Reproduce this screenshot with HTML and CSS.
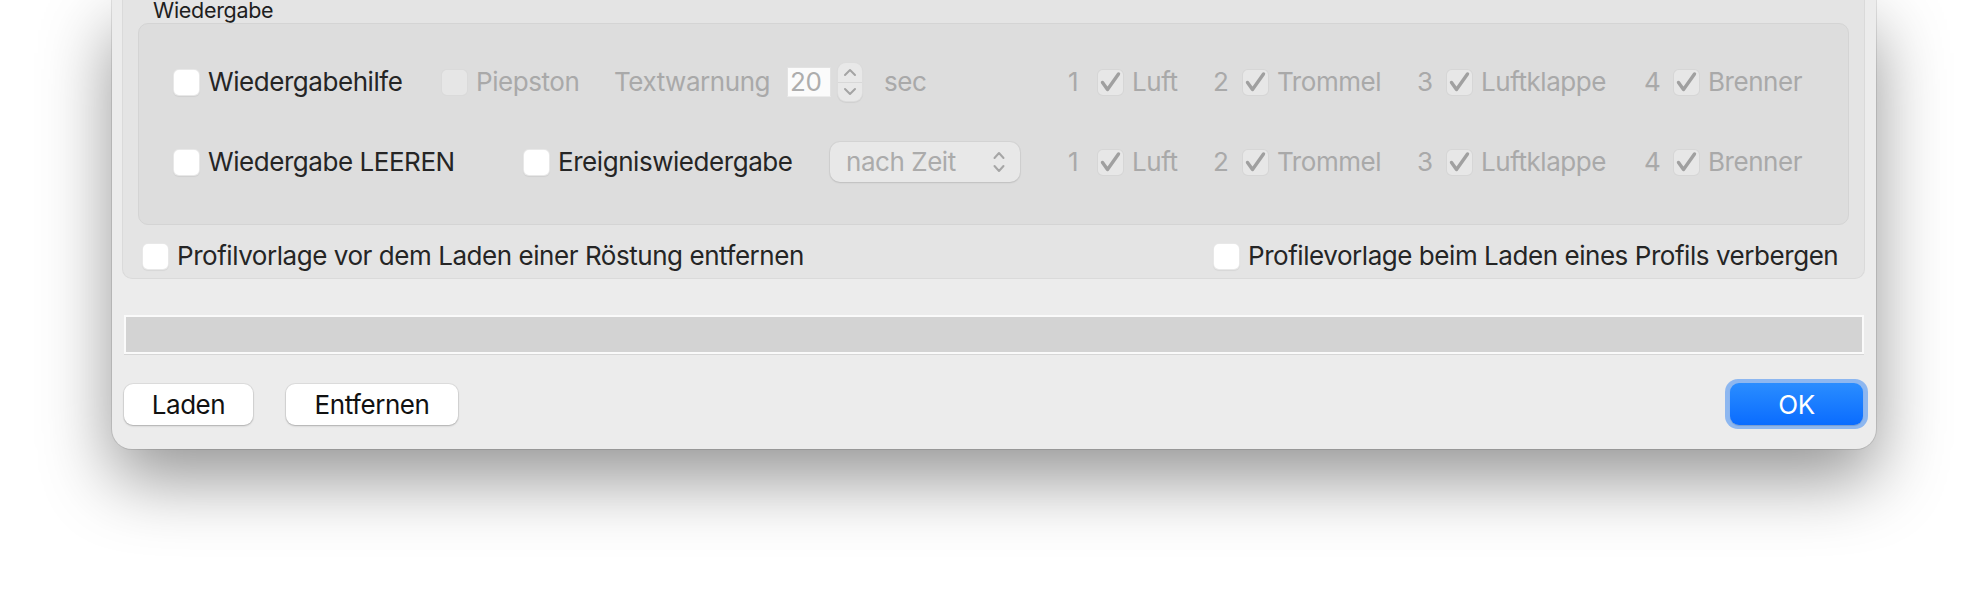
FILE: index.html
```html
<!DOCTYPE html>
<html lang="de">
<head>
<meta charset="utf-8">
<title>Wiedergabe</title>
<link rel="stylesheet" href="styles.css">
</head>
<body>
<div class="window">
  <div class="groupbox">
    <div class="group-title">Wiedergabe</div>
    <div class="inner-box">
      <div class="row">
        <div class="left">
          <label class="item w-a1"><span class="cb"></span><span class="lbl">Wiedergabehilfe</span></label>
          <label class="item w-b1 dis"><span class="cb cb-dis"></span><span class="lbl">Piepston</span></label>
          <span class="item w-c1 dis lbl">Textwarnung</span>
          <span class="numfield">20</span>
          <span class="stepper">
            <svg class="chev" width="14" height="9" viewBox="0 0 14 9"><polyline points="2,7 7,2 12,7" fill="none" stroke="#a4a4a4" stroke-width="2" stroke-linecap="round" stroke-linejoin="round"/></svg>
            <span class="stepper-div"></span>
            <svg class="chev" width="14" height="9" viewBox="0 0 14 9"><polyline points="2,2 7,7 12,2" fill="none" stroke="#a4a4a4" stroke-width="2" stroke-linecap="round" stroke-linejoin="round"/></svg>
          </span>
          <span class="lbl dis sec">sec</span>
        </div>
        <div class="chan w1"><span class="num">1</span><span class="cb cb-on"><svg width="27" height="27" viewBox="0 0 27 27"><polyline points="5.5,13.5 10.5,20.5 21.5,5" fill="none" stroke="#a0a0a0" stroke-width="3.4" stroke-linecap="round" stroke-linejoin="round"/></svg></span><span class="lbl">Luft</span></div>
        <div class="chan w2"><span class="num">2</span><span class="cb cb-on"><svg width="27" height="27" viewBox="0 0 27 27"><polyline points="5.5,13.5 10.5,20.5 21.5,5" fill="none" stroke="#a0a0a0" stroke-width="3.4" stroke-linecap="round" stroke-linejoin="round"/></svg></span><span class="lbl">Trommel</span></div>
        <div class="chan w3"><span class="num">3</span><span class="cb cb-on"><svg width="27" height="27" viewBox="0 0 27 27"><polyline points="5.5,13.5 10.5,20.5 21.5,5" fill="none" stroke="#a0a0a0" stroke-width="3.4" stroke-linecap="round" stroke-linejoin="round"/></svg></span><span class="lbl">Luftklappe</span></div>
        <div class="chan"><span class="num">4</span><span class="cb cb-on"><svg width="27" height="27" viewBox="0 0 27 27"><polyline points="5.5,13.5 10.5,20.5 21.5,5" fill="none" stroke="#a0a0a0" stroke-width="3.4" stroke-linecap="round" stroke-linejoin="round"/></svg></span><span class="lbl">Brenner</span></div>
      </div>
      <div class="row">
        <div class="left">
          <label class="item w-a2"><span class="cb"></span><span class="lbl">Wiedergabe LEEREN</span></label>
          <label class="item w-b2"><span class="cb"></span><span class="lbl">Ereigniswiedergabe</span></label>
          <span class="popup"><span class="popup-text">nach Zeit</span>
            <svg class="popup-arrows" width="14" height="24" viewBox="0 0 14 24"><polyline points="2.5,8 7,3 11.5,8" fill="none" stroke="#a6a6a6" stroke-width="2" stroke-linecap="round" stroke-linejoin="round"/><polyline points="2.5,16 7,21 11.5,16" fill="none" stroke="#a6a6a6" stroke-width="2" stroke-linecap="round" stroke-linejoin="round"/></svg>
          </span>
        </div>
        <div class="chan w1"><span class="num">1</span><span class="cb cb-on"><svg width="27" height="27" viewBox="0 0 27 27"><polyline points="5.5,13.5 10.5,20.5 21.5,5" fill="none" stroke="#a0a0a0" stroke-width="3.4" stroke-linecap="round" stroke-linejoin="round"/></svg></span><span class="lbl">Luft</span></div>
        <div class="chan w2"><span class="num">2</span><span class="cb cb-on"><svg width="27" height="27" viewBox="0 0 27 27"><polyline points="5.5,13.5 10.5,20.5 21.5,5" fill="none" stroke="#a0a0a0" stroke-width="3.4" stroke-linecap="round" stroke-linejoin="round"/></svg></span><span class="lbl">Trommel</span></div>
        <div class="chan w3"><span class="num">3</span><span class="cb cb-on"><svg width="27" height="27" viewBox="0 0 27 27"><polyline points="5.5,13.5 10.5,20.5 21.5,5" fill="none" stroke="#a0a0a0" stroke-width="3.4" stroke-linecap="round" stroke-linejoin="round"/></svg></span><span class="lbl">Luftklappe</span></div>
        <div class="chan"><span class="num">4</span><span class="cb cb-on"><svg width="27" height="27" viewBox="0 0 27 27"><polyline points="5.5,13.5 10.5,20.5 21.5,5" fill="none" stroke="#a0a0a0" stroke-width="3.4" stroke-linecap="round" stroke-linejoin="round"/></svg></span><span class="lbl">Brenner</span></div>
      </div>
    </div>
    <div class="bottom-row">
      <label class="item w-bl"><span class="cb"></span><span class="lbl">Profilvorlage vor dem Laden einer Röstung entfernen</span></label>
      <label class="item"><span class="cb"></span><span class="lbl">Profilevorlage beim Laden eines Profils verbergen</span></label>
    </div>
  </div>
  <div class="progress"></div>
  <div class="buttons">
    <button class="btn btn-laden">Laden</button>
    <button class="btn btn-entf">Entfernen</button>
    <span class="spacer"></span>
    <span class="focus-ring"><button class="btn btn-ok">OK</button></span>
  </div>
</div>
</body>
</html>
```

FILE: styles.css
```css
html, body {
  margin: 0;
  padding: 0;
  background: #ffffff;
  height: 597px;
  overflow: hidden;
}
body {
  font-family: Inter, "Noto Sans", "Liberation Sans", sans-serif;
  font-size: 26px;
  letter-spacing: -0.45px;
  color: #252525;
}
.window {
  margin-left: 112px;
  width: 1764px;
  height: 449px;
  box-sizing: border-box;
  background: #ececec;
  border-radius: 0 0 20px 20px;
  padding: 0 11px 0 10px;
  box-shadow: 0 0 0 1px rgba(0,0,0,0.10), 0 30px 70px rgba(0,0,0,0.42);
  display: flex;
  flex-direction: column;
}
.groupbox {
  height: 279px;
  box-sizing: border-box;
  background: #e4e4e4;
  border: 1px solid #dadada;
  border-top: none;
  border-radius: 0 0 10px 10px;
  padding: 0 15px 0 15px;
  display: flex;
  flex-direction: column;
}
.group-title {
  font-size: 21.5px;
  letter-spacing: -0.3px;
  line-height: 21px;
  height: 23px;
  padding-left: 15px;
  color: #1e1e1e;
}
.inner-box {
  height: 202px;
  box-sizing: border-box;
  background: #dddddd;
  border: 1px solid #d4d4d4;
  border-radius: 10px;
  padding: 38px 0 0 34px;
  display: flex;
  flex-direction: column;
  gap: 40px;
}
.row {
  display: flex;
  align-items: center;
  height: 40px;
}
.left {
  width: 895px;
  display: flex;
  align-items: center;
  flex-shrink: 0;
}
.item {
  display: flex;
  align-items: center;
  flex-shrink: 0;
}
.lbl {
  white-space: nowrap;
  line-height: 40px;
}
.dis, .dis .lbl, .num, .chan .lbl {
  color: #a9a9a9;
}
.w-a1 { width: 268px; }
.w-b1 { width: 173px; }
.w-c1 { width: 173px; }
.w-a2 { width: 350px; }
.w-b2 { width: 307px; }
.w-bl { width: 1071px; }

.cb {
  width: 27px;
  height: 27px;
  box-sizing: border-box;
  border-radius: 6px;
  background: #ffffff;
  border: 1px solid rgba(0,0,0,0.09);
  box-shadow: 0 1px 1px rgba(0,0,0,0.06);
  margin-right: 8px;
  flex-shrink: 0;
  display: inline-flex;
  align-items: center;
  justify-content: center;
  position: relative;
}
.cb svg {
  position: absolute;
  left: -1px;
  top: -1px;
}
.cb-dis {
  background: #e6e6e6;
  border-color: rgba(0,0,0,0.05);
  box-shadow: none;
}
.cb-on {
  background: #e7e7e7;
  border-color: rgba(0,0,0,0.07);
  box-shadow: none;
}
.numfield {
  width: 44px;
  height: 30px;
  box-sizing: border-box;
  background: #fbfbfb;
  border: 1px solid #e2e2e2;
  border-bottom-color: #ececec;
  color: #adadad;
  font-size: 26px;
  line-height: 28px;
  padding-left: 2px;
  flex-shrink: 0;
}
.stepper {
  width: 26px;
  height: 40px;
  box-sizing: border-box;
  margin-left: 6px;
  margin-right: 21px;
  border-radius: 9px;
  background: #e8e8e8;
  border: 1px solid rgba(0,0,0,0.05);
  box-shadow: 0 1px 1px rgba(0,0,0,0.06);
  display: flex;
  flex-direction: column;
  align-items: center;
  justify-content: space-between;
  padding: 5px 0 5px;
  flex-shrink: 0;
}
.stepper-div {
  width: 100%;
  height: 1px;
  background: #d8d8d8;
}
.chev { display: block; }
.popup {
  width: 190px;
  height: 40px;
  box-sizing: border-box;
  border-radius: 10px;
  background: #e8e8e8;
  box-shadow: 0 0 0 1px rgba(0,0,0,0.04), 0 1px 2px rgba(0,0,0,0.10);
  display: flex;
  align-items: center;
  justify-content: space-between;
  padding: 0 14px 0 16px;
  color: #ababab;
  flex-shrink: 0;
}
.popup-text {
  line-height: 40px;
  white-space: nowrap;
}
.popup-arrows { display: block; }
.chan {
  display: flex;
  align-items: center;
  flex-shrink: 0;
}
.w1 { width: 145px; }
.w2 { width: 204px; }
.w3 { width: 227px; }
.num {
  width: 29px;
  line-height: 40px;
}
.bottom-row {
  display: flex;
  align-items: center;
  height: 40px;
  margin-top: 11px;
  padding-left: 4px;
}
.progress {
  margin: 36px 1px 0 2px;
  height: 39px;
  box-sizing: border-box;
  background: #d3d3d3;
  border: 2px solid #fafafa;
  box-shadow: 0 1px 0 #d6d6d6;
}
.buttons {
  display: flex;
  align-items: center;
  margin-top: 24px;
  padding: 0 0 0 2px;
  height: 52px;
}
.spacer { flex: 1; }
.btn {
  font-family: Inter, "Noto Sans", "Liberation Sans", sans-serif;
  font-size: 26px;
  letter-spacing: -0.45px;
  color: #111111;
  height: 41px;
  box-sizing: border-box;
  background: #ffffff;
  border: none;
  border-radius: 9px;
  box-shadow: 0 0 0 1px rgba(0,0,0,0.06), 0 1px 2px rgba(0,0,0,0.22);
  padding: 0;
  line-height: 41px;
  text-align: center;
}
.btn-laden { width: 129px; }
.btn-entf { width: 172px; margin-left: 33px; }
.focus-ring {
  display: flex;
  padding: 4px 5px;
  border-radius: 13px;
  background: #8db7f0;
  margin-right: -3px;
}
.btn-ok {
  width: 133px;
  height: 42px;
  color: #ffffff;
  background: linear-gradient(#2a8dff, #0a6cff);
  box-shadow: 0 1px 1px rgba(0,0,0,0.15);
}
```
